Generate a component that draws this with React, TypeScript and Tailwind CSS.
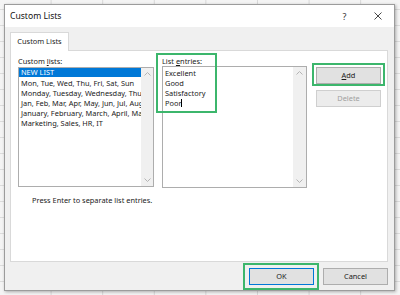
import React from 'react';

const font = "font-['Segoe_UI','Noto_Sans',sans-serif]";

const Chevron: React.FC<{ up?: boolean }> = ({ up }) => (
  <svg width="7" height="4" viewBox="0 0 7 4" className="block">
    <polyline
      points={up ? '0.5,3.5 3.5,0.5 6.5,3.5' : '0.5,0.5 3.5,3.5 6.5,0.5'}
      fill="none"
      stroke="#b4b4b4"
      strokeWidth="1"
    />
  </svg>
);

const ScrollBar: React.FC<{ width: string }> = ({ width }) => (
  <div className={`${width} h-full shrink-0 bg-[#f0f0f0] flex flex-col items-center justify-between pt-[4px] pb-[4px]`}>
    <Chevron up />
    <Chevron />
  </div>
);

const customLists = [
  'NEW LIST',
  'Mon, Tue, Wed, Thu, Fri, Sat, Sun',
  'Monday, Tuesday, Wednesday, Thursday, Friday, Saturday, Sunday',
  'Jan, Feb, Mar, Apr, May, Jun, Jul, Aug, Sep, Oct, Nov, Dec',
  'January, February, March, April, May, June, July, August',
  'Marketing, Sales, HR, IT',
];

const entries = ['Excellent', 'Good', 'Satisfactory', 'Poor'];

export default function App() {
  return (
    <div
      className={`relative w-[400px] h-[295px] overflow-hidden bg-[#f4f4f4] bg-[linear-gradient(to_right,#d8d8d8_1px,transparent_1px),linear-gradient(to_bottom,#dcdcdc_1px,transparent_1px)] bg-[size:51.6px_16px] bg-[position:-1px_9px] pt-[4px] pl-[4px] ${font} text-[#1a1a1a]`}
    >
      <div className="w-[391px] h-[287px] border border-[#9c9c9c] bg-[#f0f0f0] flex flex-col shadow-[1px_1px_3px_rgba(0,0,0,0.3)]">
        {/* title bar */}
        <div className="h-[22px] bg-white flex items-center pl-[5px]">
          <span className="text-[8.6px] leading-none text-[#111]">Custom Lists</span>
          <div className="ml-auto flex">
            <div className="w-[33px] flex justify-center text-[9px] leading-none text-[#333]">?</div>
            <div className="w-[33px] flex justify-center items-center">
              <svg width="8" height="8" viewBox="0 0 8 8">
                <path d="M0.5 0.5 L7.5 7.5 M7.5 0.5 L0.5 7.5" stroke="#333" strokeWidth="0.9" />
              </svg>
            </div>
          </div>
        </div>

        <div className="flex-1 flex flex-col pl-[5px] pr-[6px] pt-[5px]">
          {/* tab */}
          <div className="relative z-10 -mb-px w-[59px] h-[19px] bg-white border border-b-0 border-[#d9d9d9] flex items-center justify-center text-[7.4px] leading-none">
            Custom Lists
          </div>

          {/* panel */}
          <div className="h-[212px] bg-white border border-[#d9d9d9] pl-[7px] pt-[5px] flex flex-col">
            <div className="flex">
              {/* left column */}
              <div className="w-[136px] flex flex-col">
                <div className="h-[10px] leading-[10px] text-[7.4px] mb-px">
                  Custom <span className="underline">l</span>ists:
                </div>
                <div className="h-[120px] border border-[#adadad] flex overflow-hidden">
                  <div className="flex-1 min-w-0 flex flex-col text-[7.4px] whitespace-nowrap overflow-hidden">
                    {customLists.map((item, i) => (
                      <div
                        key={item}
                        className={
                          i === 0
                            ? 'h-[9px] mb-px leading-[9px] pl-[2px] bg-[#0078d7] text-white'
                            : 'h-[10px] leading-[10px] pl-[2px]'
                        }
                      >
                        {item}
                      </div>
                    ))}
                  </div>
                  <ScrollBar width="w-[12px]" />
                </div>
              </div>

              {/* middle column */}
              <div className="w-[145px] ml-[8px] flex flex-col">
                <div className="h-[10px] leading-[10px] text-[7.4px]">
                  List <span className="underline">e</span>ntries:
                </div>
                <div className="h-[122px] border border-[#adadad] flex overflow-hidden">
                  <div className="flex-1 min-w-0 flex flex-col pt-px text-[7.4px]">
                    {entries.map((item, i) => (
                      <div key={item} className="h-[10px] leading-[10px] pl-[2px] flex items-center">
                        <span>{item}</span>
                        {i === entries.length - 1 && <span className="w-px h-[8px] bg-black" />}
                      </div>
                    ))}
                  </div>
                  <ScrollBar width="w-[13px]" />
                </div>
              </div>

              {/* buttons */}
              <div className="ml-[9px] pt-[11px] flex flex-col gap-[6px]">
                <button className="w-[65px] h-[17px] bg-[#e1e1e1] border border-[#adadad] text-[7.4px] leading-none">
                  <span className="underline">A</span>dd
                </button>
                <button className="w-[65px] h-[17px] bg-[#ececec] border border-[#cfcfcf] text-[7.4px] leading-none text-[#a0a0a0]">
                  Delete
                </button>
              </div>
            </div>

            <div className="mt-[7px] ml-[14px] h-[10px] leading-[10px] text-[7.4px] text-[#222]">
              Press Enter to separate list entries.
            </div>
          </div>

          {/* footer */}
          <div className="flex justify-end gap-[9px] pt-[6px]">
            <button className="w-[65px] h-[17px] bg-[#e1e1e1] border border-[#0078d7] text-[7.4px] leading-none">
              OK
            </button>
            <button className="w-[65px] h-[17px] bg-[#e1e1e1] border border-[#adadad] text-[7.4px] leading-none">
              Cancel
            </button>
          </div>
        </div>
      </div>

      {/* annotation highlights */}
      <div className="absolute left-[156px] top-[53px] w-[61px] h-[60px] border-2 border-[#3cb66c]" />
      <div className="absolute left-[312px] top-[63px] w-[73px] h-[23px] border-2 border-[#3cb66c]" />
      <div className="absolute left-[243px] top-[263px] w-[76px] h-[27px] border-2 border-[#3cb66c]" />
    </div>
  );
}
